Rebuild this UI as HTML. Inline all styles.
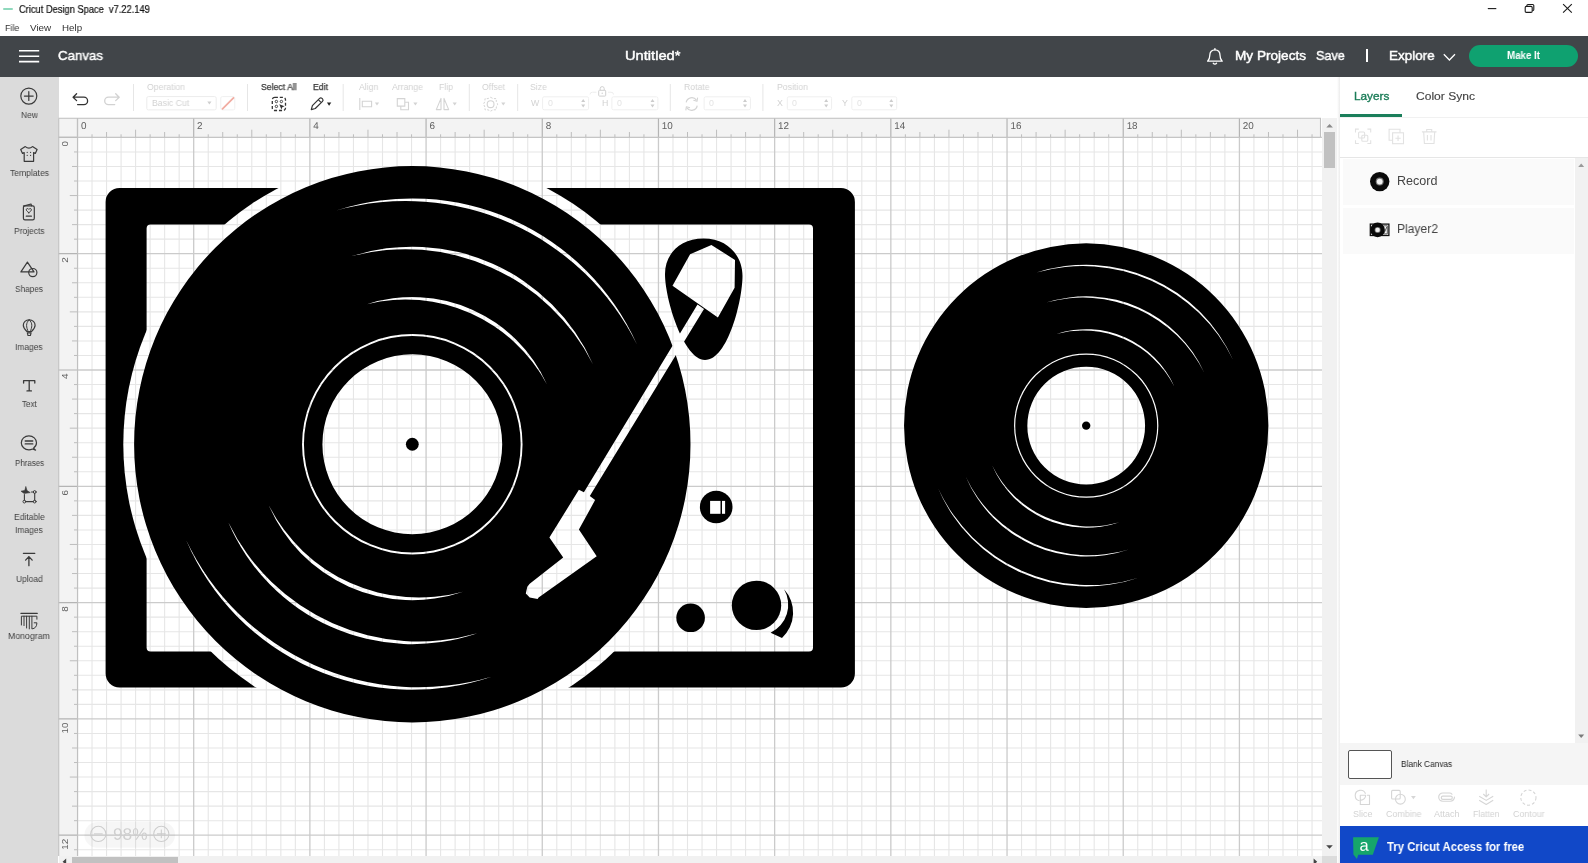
<!DOCTYPE html>
<html><head><meta charset="utf-8"><title>Cricut Design Space</title>
<style>
*{box-sizing:border-box;margin:0;padding:0}
html,body{width:1588px;height:863px;overflow:hidden;background:#fff;font-family:"Liberation Sans",sans-serif;color:#333}
.abs{position:absolute}
.t{position:absolute;white-space:nowrap;line-height:1;will-change:transform}
svg{position:absolute;overflow:visible;opacity:.999}
</style></head><body>
<div class="abs" style="left:0;top:0;width:1588px;height:36px;background:#fff"></div>
<div class="abs" style="left:3px;top:8.2px;width:10px;height:2px;border-radius:1px;background:#8fd9bd"></div>
<div class="t" style="left:19.40px;top:5.00px;font-size:10.2px;color:#111;transform:scaleX(0.9132);transform-origin:0 0;-webkit-text-stroke:0.2px #111;">Cricut Design Space&nbsp; v7.22.149</div>
<div class="t" style="left:5.30px;top:23.00px;font-size:9.6px;color:#333;transform:scaleX(0.9373);transform-origin:0 0;">File</div>
<div class="t" style="left:29.80px;top:23.00px;font-size:9.6px;color:#333;transform:scaleX(1.0274);transform-origin:0 0;">View</div>
<div class="t" style="left:61.50px;top:23.00px;font-size:9.6px;color:#333;transform:scaleX(1.0180);transform-origin:0 0;">Help</div>
<svg style="left:1480px;top:0" width="108" height="20" viewBox="1480 0 108 20" fill="none" stroke="#1a1a1a" stroke-width="1.1">
<path d="M1487.8 8.6H1496.3"/>
<rect x="1525.2" y="6.4" width="7" height="6" rx="1.2"/><path d="M1526.9 6.2V5.6Q1526.9 4.5 1528 4.5H1532.7Q1533.8 4.5 1533.8 5.6V9.4Q1533.8 10.5 1532.7 10.5H1532.4"/>
<path d="M1563.1 4.2L1571.8 12.7M1571.8 4.2L1563.1 12.7" stroke-width="1.1"/>
</svg><div class="abs" style="left:0;top:35.8px;width:1588px;height:41px;background:#414549"></div>
<svg style="left:18.9px;top:49px" width="20.2" height="14" viewBox="0 0 20.2 14"><path d="M0 1.8H20.2M0 7.2H20.2M0 12.6H20.2" stroke="#fff" stroke-width="1.6"/></svg>
<div class="t" style="left:58.30px;top:49.00px;font-size:13.5px;color:#fff;transform:scaleX(0.9831);transform-origin:0 0;-webkit-text-stroke:0.45px #fff;">Canvas</div>
<div class="t" style="left:624.70px;top:49.00px;font-size:13.5px;color:#fff;transform:scaleX(1.0857);transform-origin:0 0;-webkit-text-stroke:0.45px #fff;">Untitled*</div>
<svg style="left:1206px;top:46px" width="18" height="20" viewBox="0 0 18 20" fill="none" stroke="#fff" stroke-width="1.3" stroke-linejoin="round" stroke-linecap="round"><path d="M1.6 15.2C3.3 13.6 3.8 12 3.8 9.2C3.8 5.9 5.9 3.8 8.9 3.8C11.9 3.8 14 5.9 14 9.2C14 12 14.5 13.6 16.2 15.2Z"/><path d="M7.2 17.2C7.7 17.9 8.2 18.2 8.9 18.2C9.6 18.2 10.1 17.9 10.6 17.2"/><path d="M8.9 3.8V2.6"/></svg>
<div class="t" style="left:1234.70px;top:49.00px;font-size:13.5px;color:#fff;transform:scaleX(1.0069);transform-origin:0 0;-webkit-text-stroke:0.45px #fff;">My Projects</div>
<div class="t" style="left:1316.10px;top:49.00px;font-size:13.5px;color:#fff;transform:scaleX(0.9359);transform-origin:0 0;-webkit-text-stroke:0.45px #fff;">Save</div>
<div class="abs" style="left:1366.2px;top:49.4px;width:1.7px;height:12.3px;background:#fff"></div>
<div class="t" style="left:1389.10px;top:49.00px;font-size:13.5px;color:#fff;transform:scaleX(0.9962);transform-origin:0 0;-webkit-text-stroke:0.45px #fff;">Explore</div>
<svg style="left:1442px;top:52.7px" width="14" height="9" viewBox="0 0 14 9" fill="none" stroke="#fff" stroke-width="1.3"><path d="M1.8 1.3L7.4 7L13 1.3"/></svg>
<div class="abs" style="left:1468.9px;top:45.1px;width:109.5px;height:22.1px;border-radius:11.05px;background:#0fa170"></div>
<div class="t" style="left:1507.30px;top:51.00px;font-size:10.1px;color:#fff;font-weight:bold;transform:scaleX(0.9637);transform-origin:0 0;">Make It</div><div class="abs" style="left:58px;top:77px;width:1282px;height:41px;background:#fff"></div>
<div class="t" style="left:146.50px;top:83.00px;font-size:8.8px;color:#d2d2d2;transform:scaleX(0.9850);transform-origin:0 0;">Operation</div>
<div class="t" style="left:260.80px;top:83.00px;font-size:8.8px;color:#3a3a3a;transform:scaleX(0.9850);transform-origin:0 0;-webkit-text-stroke:0.25px #3a3a3a;">Select All</div>
<div class="t" style="left:312.70px;top:83.00px;font-size:8.8px;color:#3a3a3a;transform:scaleX(0.9850);transform-origin:0 0;-webkit-text-stroke:0.25px #3a3a3a;">Edit</div>
<div class="t" style="left:358.70px;top:83.00px;font-size:8.8px;color:#d2d2d2;transform:scaleX(0.9850);transform-origin:0 0;">Align</div>
<div class="t" style="left:391.80px;top:83.00px;font-size:8.8px;color:#d2d2d2;transform:scaleX(0.9850);transform-origin:0 0;">Arrange</div>
<div class="t" style="left:438.90px;top:83.00px;font-size:8.8px;color:#d2d2d2;transform:scaleX(0.9850);transform-origin:0 0;">Flip</div>
<div class="t" style="left:481.60px;top:83.00px;font-size:8.8px;color:#d2d2d2;transform:scaleX(0.9850);transform-origin:0 0;">Offset</div>
<div class="t" style="left:530.40px;top:83.00px;font-size:8.8px;color:#d2d2d2;transform:scaleX(0.9850);transform-origin:0 0;">Size</div>
<div class="t" style="left:683.90px;top:83.00px;font-size:8.8px;color:#d2d2d2;transform:scaleX(0.9850);transform-origin:0 0;">Rotate</div>
<div class="t" style="left:776.70px;top:83.00px;font-size:8.8px;color:#d2d2d2;transform:scaleX(0.9850);transform-origin:0 0;">Position</div>
<div class="t" style="left:151.90px;top:99.00px;font-size:8.8px;color:#d2d2d2;transform:scaleX(0.9850);transform-origin:0 0;">Basic Cut</div>
<div class="t" style="left:530.60px;top:99.00px;font-size:8.8px;color:#d2d2d2;transform:scaleX(0.9850);transform-origin:0 0;">W</div>
<div class="t" style="left:601.60px;top:99.00px;font-size:8.8px;color:#d2d2d2;transform:scaleX(0.9850);transform-origin:0 0;">H</div>
<div class="t" style="left:776.90px;top:99.00px;font-size:8.8px;color:#d2d2d2;transform:scaleX(0.9850);transform-origin:0 0;">X</div>
<div class="t" style="left:842.30px;top:99.00px;font-size:8.8px;color:#d2d2d2;transform:scaleX(0.9850);transform-origin:0 0;">Y</div>
<div class="t" style="left:547.60px;top:99.00px;font-size:8.8px;color:#e4e4e4;transform:scaleX(0.9850);transform-origin:0 0;">0</div>
<div class="t" style="left:616.90px;top:99.00px;font-size:8.8px;color:#e4e4e4;transform:scaleX(0.9850);transform-origin:0 0;">0</div>
<div class="t" style="left:709.10px;top:99.00px;font-size:8.8px;color:#e4e4e4;transform:scaleX(0.9850);transform-origin:0 0;">0</div>
<div class="t" style="left:792.30px;top:99.00px;font-size:8.8px;color:#e4e4e4;transform:scaleX(0.9850);transform-origin:0 0;">0</div>
<div class="t" style="left:856.80px;top:99.00px;font-size:8.8px;color:#e4e4e4;transform:scaleX(0.9850);transform-origin:0 0;">0</div>
<svg style="left:0;top:0" width="1588" height="863" viewBox="0 0 1588 863" fill="none">
<path d="M133.5 84V111M247.5 84V111M343.2 84V111M469.3 84V111M517.7 84V111M670.3 84V111M762.9 84V111" stroke="#e6e6e6" stroke-width="1"/>
<path d="M76.6 93.8L73.1 97.2L76.6 100.6M73.4 97.2H83.9A3.7 3.7 0 0 1 83.9 104.6H77.6" stroke="#333" stroke-width="1.3" stroke-linecap="round" stroke-linejoin="round"/>
<path d="M115.7 93.8L119.2 97.2L115.7 100.6M118.9 97.2H108.4A3.7 3.7 0 0 0 108.4 104.6H114.7" stroke="#d2d2d2" stroke-width="1.3" stroke-linecap="round" stroke-linejoin="round"/>
<rect x="146.8" y="96.6" width="69.4" height="13.3" rx="1.5" stroke="#ececec" stroke-width="1"/>
<path d="M207.3 101.6H211.5L209.4 104.6Z" fill="#cfcfcf"/>
<rect x="220.8" y="96.6" width="14" height="13.3" rx="1.5" stroke="#f0f0f0" stroke-width="1"/>
<path d="M222 109.3L234 97.4" stroke="#f1aca1" stroke-width="1.7"/>
<rect x="272.3" y="97.3" width="13.2" height="13.2" rx="2.5" stroke="#333" stroke-width="1.3" stroke-dasharray="3.1 1.9"/>
<circle cx="276.4" cy="101.5" r="1.2" stroke="#333" stroke-width="0.9"/><circle cx="281.4" cy="101.5" r="1.2" stroke="#333" stroke-width="0.9"/><circle cx="276.4" cy="106.4" r="1.2" stroke="#333" stroke-width="0.9"/>
<path d="M279.3 104.3L284.6 106.3L282.3 107.2L281.4 109.6Z" fill="#333"/>
<path d="M311.3 109.6L312.4 105.6L319.6 98.4A1.7 1.7 0 0 1 322 98.4L322.5 98.9A1.7 1.7 0 0 1 322.5 101.3L315.3 108.5Z M318.3 99.7L321.2 102.6" stroke="#333" stroke-width="1.2" stroke-linejoin="round"/>
<path d="M326.9 102.6H331.3L329.1 105.8Z" fill="#222"/>
<path d="M359.8 98V110M362.3 101.3H371.6V106.7H362.3Z" stroke="#d4d4d4" stroke-width="1.1"/>
<path d="M374.9 102.6H379.1L377 105.6Z" fill="#d4d4d4"/>
<path d="M397.3 98.6H404.8V106.1H397.3ZM400.8 106.1V109.8H408.5V102.2H404.8" stroke="#d4d4d4" stroke-width="1.1"/>
<path d="M413.3 102.6H417.5L415.4 105.6Z" fill="#d4d4d4"/>
<path d="M441 98.4V109.6H436.3ZM444 98.4V109.6H448.7Z" stroke="#d4d4d4" stroke-width="1.1" stroke-linejoin="round"/>
<path d="M452.6 102.6H456.8L454.7 105.6Z" fill="#d4d4d4"/>
<circle cx="490.6" cy="104.2" r="3.4" stroke="#d4d4d4" stroke-width="1.1"/>
<path d="M490.6 97.3L493.2 98.6L496.2 98.6L496.3 101.4L497.7 104.2L496.3 107L496.2 109.8L493.2 109.8L490.6 111.1L488 109.8L485 109.8L484.9 107L483.5 104.2L484.9 101.4L485 98.6L488 98.6Z" stroke="#d4d4d4" stroke-width="1" stroke-dasharray="2.2 1.4"/>
<path d="M501.2 102.6H505.4L503.3 105.6Z" fill="#d4d4d4"/>
<rect x="542.6" y="96.8" width="46.0" height="13" rx="1.5" stroke="#efefef" stroke-width="1"/>
<path d="M581.2 102.1H585.2L583.2 98.9ZM581.2 104.4H585.2L583.2 107.6Z" fill="#cdcdcd"/>
<rect x="611.9" y="96.8" width="46.0" height="13" rx="1.5" stroke="#efefef" stroke-width="1"/>
<path d="M650.5 102.1H654.5L652.5 98.9ZM650.5 104.4H654.5L652.5 107.6Z" fill="#cdcdcd"/>
<rect x="704.1" y="96.8" width="46.3" height="13" rx="1.5" stroke="#efefef" stroke-width="1"/>
<path d="M743.0 102.1H747.0L745.0 98.9ZM743.0 104.4H747.0L745.0 107.6Z" fill="#cdcdcd"/>
<rect x="787.3" y="96.8" width="44.3" height="13" rx="1.5" stroke="#efefef" stroke-width="1"/>
<path d="M824.2 102.1H828.2L826.2 98.9ZM824.2 104.4H828.2L826.2 107.6Z" fill="#cdcdcd"/>
<rect x="851.8" y="96.8" width="44.9" height="13" rx="1.5" stroke="#efefef" stroke-width="1"/>
<path d="M889.3 102.1H893.3L891.3 98.9ZM889.3 104.4H893.3L891.3 107.6Z" fill="#cdcdcd"/>
<path d="M590 94.5Q590 92.2 592.5 92.2H596.5M608 92.2H611Q613.5 92.2 613.5 94.5" stroke="#ededed" stroke-width="1"/>
<rect x="598.7" y="90.3" width="7" height="5.8" rx="0.8" stroke="#d0d0d0" stroke-width="1"/><path d="M600.2 90.3V88.6A2 2 0 0 1 604.2 88.6V90.3" stroke="#d0d0d0" stroke-width="1"/><circle cx="602.2" cy="93.2" r="0.7" fill="#d0d0d0"/>
<path d="M686.2 102.4A5.6 5.6 0 0 1 696.4 100.2M697.2 105.6A5.6 5.6 0 0 1 687 107.8" stroke="#d4d4d4" stroke-width="1.2"/><path d="M697.6 97.6L697 101.3L693.4 100.3M685.8 110.4L686.4 106.7L690 107.7" stroke="#d4d4d4" stroke-width="1.1" stroke-linejoin="round"/>
</svg><div class="abs" style="left:0;top:77px;width:58.5px;height:786px;background:#dbdbdb"></div>
<div class="t" style="left:20.80px;top:111.00px;font-size:9.2px;color:#3f3f3f;transform:scaleX(0.9128);transform-origin:0 0;">New</div>
<div class="t" style="left:9.65px;top:169.00px;font-size:9.2px;color:#3f3f3f;transform:scaleX(0.9325);transform-origin:0 0;">Templates</div>
<div class="t" style="left:13.90px;top:227.00px;font-size:9.2px;color:#3f3f3f;transform:scaleX(0.9207);transform-origin:0 0;">Projects</div>
<div class="t" style="left:15.20px;top:285.00px;font-size:9.2px;color:#3f3f3f;transform:scaleX(0.8973);transform-origin:0 0;">Shapes</div>
<div class="t" style="left:15.40px;top:343.00px;font-size:9.2px;color:#3f3f3f;transform:scaleX(0.9148);transform-origin:0 0;">Images</div>
<div class="t" style="left:21.70px;top:400.00px;font-size:9.2px;color:#3f3f3f;transform:scaleX(0.8772);transform-origin:0 0;">Text</div>
<div class="t" style="left:14.60px;top:459.00px;font-size:9.2px;color:#3f3f3f;transform:scaleX(0.8652);transform-origin:0 0;">Phrases</div>
<div class="t" style="left:13.85px;top:513.00px;font-size:9.2px;color:#3f3f3f;transform:scaleX(0.9294);transform-origin:0 0;">Editable</div>
<div class="t" style="left:15.30px;top:526.00px;font-size:9.2px;color:#3f3f3f;transform:scaleX(0.9214);transform-origin:0 0;">Images</div>
<div class="t" style="left:15.75px;top:575.00px;font-size:9.2px;color:#3f3f3f;transform:scaleX(0.9158);transform-origin:0 0;">Upload</div>
<div class="t" style="left:7.95px;top:632.00px;font-size:9.2px;color:#3f3f3f;transform:scaleX(0.9528);transform-origin:0 0;">Monogram</div>
<svg style="left:0;top:0" width="60" height="863" viewBox="0 0 60 863" fill="none" stroke="#3a3a3a" stroke-width="1.2" stroke-linecap="round" stroke-linejoin="round">
<circle cx="28.8" cy="96.1" r="8"/><path d="M28.8 91.7V100.5M24.4 96.1H33.2"/>
<path d="M25.3 146.6Q28.9 149.6 32.5 146.6L37.1 149.6L35.3 153.4L33.6 152.6V161.3H24.2V152.6L22.5 153.4L20.7 149.6Z"/>
<path d="M27.2 152.3V152.4M30.6 152.3V152.4M27.2 155.3V155.4M30.6 155.3V155.4" stroke-width="1.1"/>
<path d="M23.4 206.2L31 204L31.6 205.9"/><rect x="23.4" y="205.9" width="10.9" height="14" rx="1.6"/>
<path d="M28.85 212.7C27 211.4 26.3 210.5 26.3 209.7C26.3 208.3 28.2 208.1 28.85 209.4C29.5 208.1 31.4 208.3 31.4 209.7C31.4 210.5 30.7 211.4 28.85 212.7Z" stroke-width="1"/><path d="M26.3 216.2H31.4"/>
<path d="M27.4 262.1L34 271.9H20.9Z"/><circle cx="32.8" cy="272.6" r="4.1"/>
<path d="M29.2 319.8C32.6 319.8 35.1 322.2 35.1 325.3C35.1 328.2 33 330 31.3 331.7H27.1C25.4 330 23.3 328.2 23.3 325.3C23.3 322.2 25.8 319.8 29.2 319.8Z"/>
<path d="M29.2 319.8C27.4 321.5 26.6 323.3 26.6 325.3C26.6 327.6 27.4 329.7 28.2 331.7M29.2 319.8C31 321.5 31.8 323.3 31.8 325.3C31.8 327.6 31 329.7 30.2 331.7" stroke-width="1"/>
<path d="M27.3 332.9H31.1L30.4 335.5H28Z" stroke-width="1.1"/>
<path d="M23.6 383V380.7H34.8V383M29.2 380.7V390.9M27 390.9H31.4" stroke-width="1.3"/>
<path d="M33.6 448.1C35.4 446.8 36.5 444.9 36.5 442.8C36.5 438.9 33.1 435.8 28.9 435.8C24.7 435.8 21.3 438.9 21.3 442.8C21.3 446.7 24.7 449.8 28.9 449.8C30.2 449.8 31.4 449.5 32.5 449L35.6 450.1Z"/><path d="M25.2 441H32.8M25.2 443.9H32.8" stroke-width="1.3"/>
<path d="M25.9 486.8L27 490.6L30.2 492.6L24.2 493.5L21 491.2L24.6 490.4Z" fill="#3a3a3a" stroke-width="0.6"/>
<path d="M24.4 494.6V500.2M25.8 501.6H33.3M34.7 500.2V493.4M33.3 492H31.4" stroke-width="1.1"/><circle cx="24.4" cy="501.6" r="1.4" stroke-width="1"/><circle cx="34.7" cy="501.6" r="1.4" stroke-width="1"/><circle cx="34.7" cy="492" r="1.4" stroke-width="1"/>
<path d="M23.4 553.3H34.8M28.9 565.7V556.6M25.6 560.1L28.9 556.6L32.2 560.1" stroke-width="1.3"/>
<path d="M20.9 613.4H37.3" stroke-width="1.1"/><path d="M21.4 625V616.2H29.3V628.9M24 625.6V616.2M26.6 628V616.2" stroke-width="1"/><path d="M36.9 619.2V616.2H29.3M31.9 616.2V628.9C35 628.6 36.9 626.6 36.9 622.8H34.2" stroke-width="1"/>
</svg>
<div class="abs" style="left:58px;top:118px;width:1264px;height:745px;background:#fff"></div>
<div class="abs" style="left:1321.5px;top:118px;width:15px;height:738px;background:#f1f1f1"></div>
<div class="abs" style="left:1324.1px;top:132.4px;width:10.8px;height:35.4px;background:#c1c1c1"></div>
<div class="abs" style="left:58.5px;top:856px;width:1263.5px;height:7px;background:#f1f1f1"></div>
<div class="abs" style="left:71.9px;top:857px;width:105.7px;height:6px;background:#c1c1c1"></div>
<div class="abs" style="left:1321.5px;top:856px;width:15px;height:7px;background:#dcdcdc"></div>
<svg style="left:0;top:0;opacity:.999" width="1588" height="863" viewBox="0 0 1588 863">
<path d="M92.02 137V856M106.55 137V856M121.07 137V856M135.6 137V856M150.12 137V856M164.64 137V856M179.17 137V856M208.22 137V856M222.74 137V856M237.26 137V856M251.79 137V856M266.31 137V856M280.84 137V856M295.36 137V856M324.41 137V856M338.93 137V856M353.46 137V856M367.98 137V856M382.5 137V856M397.03 137V856M411.55 137V856M440.6 137V856M455.12 137V856M469.65 137V856M484.17 137V856M498.7 137V856M513.22 137V856M527.74 137V856M556.79 137V856M571.32 137V856M585.84 137V856M600.36 137V856M614.89 137V856M629.41 137V856M643.94 137V856M672.98 137V856M687.51 137V856M702.03 137V856M716.56 137V856M731.08 137V856M745.6 137V856M760.13 137V856M789.18 137V856M803.7 137V856M818.22 137V856M832.75 137V856M847.27 137V856M861.8 137V856M876.32 137V856M905.37 137V856M919.89 137V856M934.42 137V856M948.94 137V856M963.46 137V856M977.99 137V856M992.51 137V856M1021.56 137V856M1036.08 137V856M1050.61 137V856M1065.13 137V856M1079.66 137V856M1094.18 137V856M1108.7 137V856M1137.75 137V856M1152.28 137V856M1166.8 137V856M1181.32 137V856M1195.85 137V856M1210.37 137V856M1224.9 137V856M1253.94 137V856M1268.47 137V856M1282.99 137V856M1297.52 137V856M1312.04 137V856M77 151.94H1322M77 166.48H1322M77 181.01H1322M77 195.55H1322M77 210.09H1322M77 224.63H1322M77 239.17H1322M77 268.24H1322M77 282.78H1322M77 297.32H1322M77 311.86H1322M77 326.39H1322M77 340.93H1322M77 355.47H1322M77 384.55H1322M77 399.08H1322M77 413.62H1322M77 428.16H1322M77 442.7H1322M77 457.24H1322M77 471.77H1322M77 500.85H1322M77 515.39H1322M77 529.93H1322M77 544.46H1322M77 559H1322M77 573.54H1322M77 588.08H1322M77 617.15H1322M77 631.69H1322M77 646.23H1322M77 660.77H1322M77 675.31H1322M77 689.84H1322M77 704.38H1322M77 733.46H1322M77 748H1322M77 762.53H1322M77 777.07H1322M77 791.61H1322M77 806.15H1322M77 820.69H1322M77 849.76H1322" stroke="#e6e6e6" stroke-width="1.1" fill="none"/>
<path d="M77.5 137V856M193.69 137V856M309.88 137V856M426.08 137V856M542.27 137V856M658.46 137V856M774.65 137V856M890.84 137V856M1007.04 137V856M1123.23 137V856M1239.42 137V856M77 137.4H1322M77 253.7H1322M77 370.01H1322M77 486.31H1322M77 602.62H1322M77 718.92H1322M77 835.22H1322" stroke="#cbcbcb" stroke-width="1.3" fill="none"/>
<defs><mask id="mf" maskUnits="userSpaceOnUse" x="0" y="0" width="1588" height="863"><rect x="0" y="0" width="1588" height="863" fill="#fff"/><circle cx="412.5" cy="444.25" r="289.2" fill="#000"/></mask></defs>
<path d="M119.6 188H840.9A14 14 0 0 1 854.9 202V673.6A14 14 0 0 1 840.9 687.6H119.6A14 14 0 0 1 105.6 673.6V202A14 14 0 0 1 119.6 188ZM150.6 224.4H809A4 4 0 0 1 813 228.4V647.4A4 4 0 0 1 809 651.4H150.6A4 4 0 0 1 146.6 647.4V228.4A4 4 0 0 1 150.6 224.4Z" fill="#000" fill-rule="evenodd" mask="url(#mf)"/>
<defs><mask id="mt" maskUnits="userSpaceOnUse" x="0" y="0" width="1588" height="863"><rect x="0" y="0" width="1588" height="863" fill="#fff"/><path d="M697.5 304.4L704 309L589.8 496.1L595.1 500.1L578.9 529.6L596.7 556.2L538.6 597.6L537.6 599.1L529.7 597.6L525.8 593.6L527.3 586.7L529.7 583.8L563.2 557.6L549.4 537.5L578.9 489.8L583.9 492.2Z" fill="#000"/></mask></defs>
<path d="M134.1 444.25a278.2 278.2 0 1 0 556.4 0a278.2 278.2 0 1 0 -556.4 0ZM302.05 444.25a110.25 110.25 0 1 0 220.5 0a110.25 110.25 0 1 0 -220.5 0ZM303.95 444.25a108.35 108.35 0 1 0 216.7 0a108.35 108.35 0 1 0 -216.7 0ZM322.4 444.25a89.9 89.9 0 1 0 179.8 0a89.9 89.9 0 1 0 -179.8 0ZM336.34 210.48A245.8 245.8 0 0 1 636.85 344.27A258.29 258.29 0 0 0 336.34 210.48ZM351.24 256.32A197.6 197.6 0 0 1 592.82 363.88A210.33 210.33 0 0 0 351.24 256.32ZM366.78 304.16A147.3 147.3 0 0 1 546.87 384.34A160.48 160.48 0 0 0 366.78 304.16ZM492.26 676.47A245.6 245.6 0 0 1 186.22 540.21A257.32 257.32 0 0 0 492.26 676.47ZM477.38 633.26A199.9 199.9 0 0 1 228.29 522.36A211.83 211.83 0 0 0 477.38 633.26ZM463.06 591.66A155.9 155.9 0 0 1 268.79 505.16A168.15 168.15 0 0 0 463.06 591.66Z" fill="#000" fill-rule="evenodd" mask="url(#mt)"/>
<circle cx="412.3" cy="444.25" r="6.4" fill="#000"/>
<path d="M703.5 238.5C728 238.5 742.5 256 742.5 276C742.5 300 728 360 705 360C684 360 665 300 665 274C665 254 680 238.5 703.5 238.5ZM672.5 285.8L690.1 254.3L711.4 245L735 259.9L734.6 287.7L717.9 317.4Z" fill="#000" fill-rule="evenodd" mask="url(#mt)"/>
<circle cx="716.2" cy="507" r="16.3" fill="#000"/>
<rect x="710.1" y="500.9" width="10.4" height="12.9" fill="#fff"/><rect x="722" y="500.9" width="3.1" height="12.9" fill="#fff"/>
<circle cx="690.6" cy="617.8" r="14.3" fill="#000"/>
<circle cx="756.5" cy="605.4" r="24.7" fill="#000"/>
<path d="M784.1 589.3A34.45 34.45 0 0 1 782 637.9L770.6 632.7A31 31 0 0 0 784.1 589.3Z" fill="#000"/>
<path d="M904.05 425.65a182.15 182.15 0 1 0 364.3 0a182.15 182.15 0 1 0 -364.3 0ZM1014.04 425.65a72.16 72.16 0 1 0 144.33 0a72.16 72.16 0 1 0 -144.33 0ZM1015.24 425.65a70.96 70.96 0 1 0 141.93 0a70.96 70.96 0 1 0 -141.93 0ZM1027.34 425.65a58.86 58.86 0 1 0 117.72 0a58.86 58.86 0 1 0 -117.72 0ZM1036.47 272.59A160.94 160.94 0 0 1 1233.22 360.19A167.07 167.07 0 0 0 1036.47 272.59ZM1046.22 302.6A129.38 129.38 0 0 1 1204.39 373.03A135.6 135.6 0 0 0 1046.22 302.6ZM1056.4 333.93A96.44 96.44 0 0 1 1174.31 386.42A102.83 102.83 0 0 0 1056.4 333.93ZM1138.55 577.69A160.81 160.81 0 0 1 938.18 488.48A166.56 166.56 0 0 0 1138.55 577.69ZM1128.81 549.4A130.88 130.88 0 0 1 965.72 476.79A136.72 136.72 0 0 0 1128.81 549.4ZM1119.43 522.16A102.07 102.07 0 0 1 992.24 465.53A108.03 108.03 0 0 0 1119.43 522.16Z" fill="#000" fill-rule="evenodd"/>
<circle cx="1086.2" cy="425.65" r="4.19" fill="#000"/>
<rect x="58" y="118" width="1262.5" height="19.3" fill="#f3f3f3"/>
<rect x="58" y="118" width="19.5" height="738" fill="#f3f3f3"/>
<path d="M92.02 134.3V137.3M106.55 132V137.3M121.07 134.3V137.3M135.6 129.7V137.3M150.12 134.3V137.3M164.64 132V137.3M179.17 134.3V137.3M208.22 134.3V137.3M222.74 132V137.3M237.26 134.3V137.3M251.79 129.7V137.3M266.31 134.3V137.3M280.84 132V137.3M295.36 134.3V137.3M324.41 134.3V137.3M338.93 132V137.3M353.46 134.3V137.3M367.98 129.7V137.3M382.5 134.3V137.3M397.03 132V137.3M411.55 134.3V137.3M440.6 134.3V137.3M455.12 132V137.3M469.65 134.3V137.3M484.17 129.7V137.3M498.7 134.3V137.3M513.22 132V137.3M527.74 134.3V137.3M556.79 134.3V137.3M571.32 132V137.3M585.84 134.3V137.3M600.36 129.7V137.3M614.89 134.3V137.3M629.41 132V137.3M643.94 134.3V137.3M672.98 134.3V137.3M687.51 132V137.3M702.03 134.3V137.3M716.56 129.7V137.3M731.08 134.3V137.3M745.6 132V137.3M760.13 134.3V137.3M789.18 134.3V137.3M803.7 132V137.3M818.22 134.3V137.3M832.75 129.7V137.3M847.27 134.3V137.3M861.8 132V137.3M876.32 134.3V137.3M905.37 134.3V137.3M919.89 132V137.3M934.42 134.3V137.3M948.94 129.7V137.3M963.46 134.3V137.3M977.99 132V137.3M992.51 134.3V137.3M1021.56 134.3V137.3M1036.08 132V137.3M1050.61 134.3V137.3M1065.13 129.7V137.3M1079.66 134.3V137.3M1094.18 132V137.3M1108.7 134.3V137.3M1137.75 134.3V137.3M1152.28 132V137.3M1166.8 134.3V137.3M1181.32 129.7V137.3M1195.85 134.3V137.3M1210.37 132V137.3M1224.9 134.3V137.3M1253.94 134.3V137.3M1268.47 132V137.3M1282.99 134.3V137.3M1297.52 129.7V137.3M1312.04 134.3V137.3M74 151.94H77.5M72 166.48H77.5M74 181.01H77.5M69.8 195.55H77.5M74 210.09H77.5M72 224.63H77.5M74 239.17H77.5M74 268.24H77.5M72 282.78H77.5M74 297.32H77.5M69.8 311.86H77.5M74 326.39H77.5M72 340.93H77.5M74 355.47H77.5M74 384.55H77.5M72 399.08H77.5M74 413.62H77.5M69.8 428.16H77.5M74 442.7H77.5M72 457.24H77.5M74 471.77H77.5M74 500.85H77.5M72 515.39H77.5M74 529.93H77.5M69.8 544.46H77.5M74 559H77.5M72 573.54H77.5M74 588.08H77.5M74 617.15H77.5M72 631.69H77.5M74 646.23H77.5M69.8 660.77H77.5M74 675.31H77.5M72 689.84H77.5M74 704.38H77.5M74 733.46H77.5M72 748H77.5M74 762.53H77.5M69.8 777.07H77.5M74 791.61H77.5M72 806.15H77.5M74 820.69H77.5M74 849.76H77.5" stroke="#bdbdbd" stroke-width="1" fill="none"/>
<path d="M77.5 118.3V137.3M193.69 118.3V137.3M309.88 118.3V137.3M426.08 118.3V137.3M542.27 118.3V137.3M658.46 118.3V137.3M774.65 118.3V137.3M890.84 118.3V137.3M1007.04 118.3V137.3M1123.23 118.3V137.3M1239.42 118.3V137.3M58.5 137.4H77.5M58.5 253.7H77.5M58.5 370.01H77.5M58.5 486.31H77.5M58.5 602.62H77.5M58.5 718.92H77.5M58.5 835.22H77.5" stroke="#b4b4b4" stroke-width="1.2" fill="none"/>
<path d="M58.5 118.3H1320.5V137.3M58.5 137.3H1320.5M77.5 118.3V856M58.7 118.3V856" stroke="#c0c0c0" stroke-width="1.1" fill="none"/>
<text transform="translate(80.9 128.9) rotate(0.03)" font-size="9.9" fill="#606060" font-family="Liberation Sans, sans-serif">0</text>
<text transform="translate(197.09 128.9) rotate(0.03)" font-size="9.9" fill="#606060" font-family="Liberation Sans, sans-serif">2</text>
<text transform="translate(313.28 128.9) rotate(0.03)" font-size="9.9" fill="#606060" font-family="Liberation Sans, sans-serif">4</text>
<text transform="translate(429.48 128.9) rotate(0.03)" font-size="9.9" fill="#606060" font-family="Liberation Sans, sans-serif">6</text>
<text transform="translate(545.67 128.9) rotate(0.03)" font-size="9.9" fill="#606060" font-family="Liberation Sans, sans-serif">8</text>
<text transform="translate(661.86 128.9) rotate(0.03)" font-size="9.9" fill="#606060" font-family="Liberation Sans, sans-serif">10</text>
<text transform="translate(778.05 128.9) rotate(0.03)" font-size="9.9" fill="#606060" font-family="Liberation Sans, sans-serif">12</text>
<text transform="translate(894.24 128.9) rotate(0.03)" font-size="9.9" fill="#606060" font-family="Liberation Sans, sans-serif">14</text>
<text transform="translate(1010.44 128.9) rotate(0.03)" font-size="9.9" fill="#606060" font-family="Liberation Sans, sans-serif">16</text>
<text transform="translate(1126.63 128.9) rotate(0.03)" font-size="9.9" fill="#606060" font-family="Liberation Sans, sans-serif">18</text>
<text transform="translate(1242.82 128.9) rotate(0.03)" font-size="9.9" fill="#606060" font-family="Liberation Sans, sans-serif">20</text>
<text transform="translate(67.9 141) rotate(-90)" text-anchor="end" font-size="9.9" fill="#606060" font-family="Liberation Sans, sans-serif">0</text>
<text transform="translate(67.9 257.3) rotate(-90)" text-anchor="end" font-size="9.9" fill="#606060" font-family="Liberation Sans, sans-serif">2</text>
<text transform="translate(67.9 373.61) rotate(-90)" text-anchor="end" font-size="9.9" fill="#606060" font-family="Liberation Sans, sans-serif">4</text>
<text transform="translate(67.9 489.91) rotate(-90)" text-anchor="end" font-size="9.9" fill="#606060" font-family="Liberation Sans, sans-serif">6</text>
<text transform="translate(67.9 606.22) rotate(-90)" text-anchor="end" font-size="9.9" fill="#606060" font-family="Liberation Sans, sans-serif">8</text>
<text transform="translate(67.9 722.52) rotate(-90)" text-anchor="end" font-size="9.9" fill="#606060" font-family="Liberation Sans, sans-serif">10</text>
<text transform="translate(67.9 838.82) rotate(-90)" text-anchor="end" font-size="9.9" fill="#606060" font-family="Liberation Sans, sans-serif">12</text>
<path d="M1326.3 127.6L1329.6 124L1332.9 127.6Z" fill="#8a8a8a"/><path d="M1326.2 845.2L1329.5 848.8L1332.8 845.2Z" fill="#444"/>
<path d="M66.2 858.6L62.6 861.8L66.2 865Z" fill="#444"/><path d="M1313.6 858.6L1317.2 861.8L1313.6 865Z" fill="#444"/>
<rect x="84.4" y="822" width="90.7" height="25.8" rx="12.9" fill="#000" fill-opacity="0.035"/>
<circle cx="98.3" cy="833.9" r="7.6" fill="none" stroke="#cdcdcd" stroke-width="1.1"/><path d="M93.9 833.9H102.7" stroke="#cdcdcd" stroke-width="1.1"/>
<circle cx="161.3" cy="833.9" r="7.6" fill="none" stroke="#cdcdcd" stroke-width="1.1"/><path d="M156.9 833.9H165.7M161.3 829.5V838.3" stroke="#cdcdcd" stroke-width="1.1"/>
<text transform="translate(113 839.7) rotate(0.03)" font-size="16.6" fill="#cfcfcf" textLength="34.6" lengthAdjust="spacingAndGlyphs" font-family="Liberation Sans, sans-serif">98%</text>
</svg>
<div class="abs" style="left:1336.5px;top:76.6px;width:3px;height:787px;background:linear-gradient(90deg,#fff,#ececec)"></div>
<div class="abs" style="left:1339.5px;top:76.6px;width:249px;height:787px;background:#fff"></div>
<div class="t" style="left:1353.60px;top:91.00px;font-size:10.8px;color:#1c7d58;transform:scaleX(1.0920);transform-origin:0 0;-webkit-text-stroke:0.35px #1c7d58;">Layers</div>
<div class="t" style="left:1416.00px;top:91.00px;font-size:10.9px;color:#444;transform:scaleX(1.1067);transform-origin:0 0;-webkit-text-stroke:0.15px #444;">Color Sync</div>
<div class="abs" style="left:1340px;top:114px;width:62px;height:3px;background:#1b7f5b"></div>
<div class="abs" style="left:1340px;top:117px;width:248px;height:1px;background:#f1f1f1"></div>
<div class="abs" style="left:1340px;top:156.8px;width:248px;height:1px;background:#e6e6e6"></div>
<div class="abs" style="left:1343px;top:159px;width:230.5px;height:46.2px;background:#fafafa"></div>
<div class="abs" style="left:1343px;top:208.4px;width:230.5px;height:45.3px;background:#fafafa"></div>
<div class="t" style="left:1396.80px;top:175.00px;font-size:12.5px;color:#444;transform:scaleX(1.0050);transform-origin:0 0;">Record</div>
<div class="t" style="left:1396.80px;top:223.00px;font-size:12.5px;color:#444;transform:scaleX(0.9673);transform-origin:0 0;">Player2</div>
<div class="abs" style="left:1574.5px;top:157.5px;width:13.5px;height:586px;background:#f1f1f1"></div>
<div class="abs" style="left:1340px;top:743px;width:248px;height:42.2px;background:#f5f5f5"></div>
<div class="abs" style="left:1348.2px;top:749.6px;width:43.8px;height:29.7px;background:#fff;border:1px solid #555;border-radius:2px"></div>
<div class="t" style="left:1400.50px;top:760.00px;font-size:9.2px;color:#222;transform:scaleX(0.9020);transform-origin:0 0;">Blank Canvas</div>
<div class="t" style="left:1352.55px;top:810.00px;font-size:9.0px;color:#d3d3d3;transform:scaleX(0.9996);transform-origin:0 0;">Slice</div>
<div class="t" style="left:1385.55px;top:810.00px;font-size:9.0px;color:#d3d3d3;transform:scaleX(0.9856);transform-origin:0 0;">Combine</div>
<div class="t" style="left:1433.95px;top:810.00px;font-size:9.0px;color:#d3d3d3;transform:scaleX(0.9994);transform-origin:0 0;">Attach</div>
<div class="t" style="left:1473.05px;top:810.00px;font-size:9.0px;color:#d3d3d3;transform:scaleX(0.9631);transform-origin:0 0;">Flatten</div>
<div class="t" style="left:1512.75px;top:810.00px;font-size:9.0px;color:#d3d3d3;transform:scaleX(0.9838);transform-origin:0 0;">Contour</div>
<div class="abs" style="left:1340px;top:825.8px;width:248px;height:38px;background:#1148c8"></div>
<div class="t" style="left:1386.50px;top:841.00px;font-size:12.6px;color:#fff;font-weight:bold;transform:scaleX(0.8980);transform-origin:0 0;">Try Cricut Access for free</div>
<svg style="left:0;top:0" width="1588" height="863" viewBox="0 0 1588 863" fill="none">
<path d="M1355.5 132.4V129.1H1358.8M1367.4 129.1H1370.7V132.4M1370.7 140.2V143.5H1367.4M1358.8 143.5H1355.5V140.2" stroke="#e2e2e2" stroke-width="1.1"/>
<rect x="1358.6" y="132" width="6" height="6" rx="1" stroke="#e2e2e2" stroke-width="1.1"/><rect x="1361.8" y="135.2" width="6" height="6" rx="1" stroke="#e2e2e2" stroke-width="1.1"/>
<path d="M1392.6 140.2H1389.1V129.3H1400V132.8" stroke="#e2e2e2" stroke-width="1.1"/><rect x="1392.6" y="132.8" width="10.9" height="10.9" stroke="#e2e2e2" stroke-width="1.1"/><path d="M1398.05 135.6V140.9M1395.4 138.25H1400.7" stroke="#e2e2e2" stroke-width="1.1"/>
<path d="M1421.9 131.9H1436.5M1426.7 131.9V129.5H1431.7V131.9M1423.7 131.9L1424.4 143.5H1434L1434.7 131.9M1427.4 135V140.6M1431 135V140.6" stroke="#e2e2e2" stroke-width="1.1"/>
<path d="M1578.2 167L1581.2 163.6L1584.2 167Z" fill="#9a9a9a"/><path d="M1578.2 734.6L1581.2 738L1584.2 734.6Z" fill="#7a7a7a"/>
<circle cx="1379.7" cy="181.6" r="9.7" fill="#0a0a0a"/><circle cx="1379.7" cy="181.6" r="4" fill="#777"/><circle cx="1379.7" cy="181.6" r="2.9" fill="#f2f2f2"/>
<rect x="1370.3" y="224.1" width="18.6" height="11.4" stroke="#111" stroke-width="1.3"/><path d="M1383.5 225.8H1387.3V233.9H1383.5" stroke="#333" stroke-width="0.8"/><path d="M1384.3 232.6L1386.8 227" stroke="#444" stroke-width="0.9"/>
<circle cx="1377.6" cy="229.9" r="7.3" fill="#0a0a0a"/><circle cx="1377.6" cy="229.9" r="3" fill="#777"/><circle cx="1377.6" cy="229.9" r="2.2" fill="#f2f2f2"/>
<path d="M1359.6 800.8A5.3 5.3 0 1 1 1365.5 793.8" stroke="#d6d6d6" stroke-width="1.1"/>
<path d="M1360.3 800.2V804.5H1369.5V795.3H1367M1360.3 795.3H1365.7Q1365.6 799.6 1360.3 800.4Z" stroke="#d6d6d6" stroke-width="1.1" stroke-linejoin="round"/>
<rect x="1391.6" y="790.4" width="8.6" height="8.6" rx="1" stroke="#d6d6d6" stroke-width="1.1"/><circle cx="1400.4" cy="799.2" r="4.9" stroke="#d6d6d6" stroke-width="1.1"/>
<path d="M1411 795.9H1415.8L1413.4 799.2Z" fill="#d6d6d6"/>
<path d="M1443 796.1H1450.7A1.6 1.6 0 0 1 1450.7 799.3H1442.9A1.6 1.6 0 0 1 1442.9 796.1M1452 794.2Q1451.2 793 1449.5 793H1442.8A4.1 4.1 0 0 0 1442.8 801.2H1450.4A4.1 4.1 0 0 0 1454.5 797.1" stroke="#d6d6d6" stroke-width="1.15" stroke-linecap="round"/>
<path d="M1486.2 789.6V796.6M1483.3 794L1486.2 796.9L1489.1 794M1479.2 796.2L1486.2 800.4L1493.2 796.2M1479.2 800.3L1486.2 804.5L1493.2 800.3" stroke="#d6d6d6" stroke-width="1.1" stroke-linejoin="round"/>
<circle cx="1528.4" cy="797.6" r="7.6" stroke="#d6d6d6" stroke-width="1.1" stroke-dasharray="3 2.1"/>
<path d="M1353.1 837.2H1378.9L1372.8 854.8H1358.3L1356.9 858.9L1353.4 854.6Z" fill="#16a56b"/>
<text transform="translate(1359.6 850.8) rotate(0.03)" font-size="16.5" fill="#fff" font-family="Liberation Sans, sans-serif">a</text>
</svg></body></html>
